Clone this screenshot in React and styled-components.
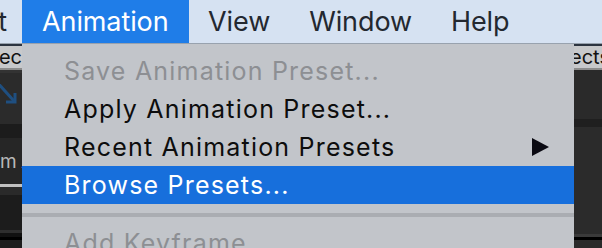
import React from "react";
import styled, { createGlobalStyle } from "styled-components";

const GlobalStyle = createGlobalStyle`
  html, body {
    margin: 0;
    padding: 0;
    background: #262626;
  }
  body {
    width: 602px;
    height: 248px;
    overflow: hidden;
    font-family: Inter, "Liberation Sans", sans-serif;
  }
`;

const Screen = styled.div`
  position: relative;
  width: 602px;
  height: 248px;
  overflow: hidden;
  display: flex;
  flex-direction: column;
`;

const MenuBar = styled.div`
  display: flex;
  flex-shrink: 0;
  height: 43px;
  background: #d6e2f2;
  border-bottom: 1px solid #98a2ae;
`;

const CutSlot = styled.div`
  width: 22px;
  display: flex;
  justify-content: flex-end;
  overflow: hidden;
`;

const BarItem = styled.div`
  display: flex;
  align-items: center;
  padding: 0 ${(p) => p.$pad || 19.5}px;
  font-size: 27px;
  letter-spacing: -0.1px;
  white-space: nowrap;
  color: ${(p) => (p.$active ? "#ffffff" : "#232830")};
  background: ${(p) => (p.$active ? "#1f7de8" : "transparent")};
`;

const Workspace = styled.div`
  flex: 1;
  display: flex;
  background: #262626;
`;

const Pane = styled.div`
  width: ${(p) => p.$width}px;
  display: flex;
  flex-direction: column;
  overflow: hidden;
`;

const Middle = styled.div`
  flex: 1;
  background: #262626;
`;

const Strip = styled.div`
  height: ${(p) => p.$h}px;
  flex-shrink: 0;
  background: ${(p) => p.$bg};
  ${(p) => (p.$grow ? "flex: 1;" : "")}
`;

const Tab = styled.div`
  height: 22px;
  flex-shrink: 0;
  display: flex;
  align-items: center;
  justify-content: ${(p) => (p.$align === "end" ? "flex-end" : "flex-start")};
  background: #c8c9cb;
  border-top: 2px solid #2c3440;
  border-bottom: 2px solid #8c8c8c;
  font-size: 20px;
  color: #111;
  white-space: nowrap;
`;

const TabText = styled.span`
  margin-left: ${(p) => p.$shift || 0}px;
`;

const ArrowArea = styled.div`
  height: 51px;
  flex-shrink: 0;
  background: #2b2b2b;
  border-top: 3px solid #333;
  display: flex;
  align-items: flex-start;
`;

const LabelArea = styled.div`
  height: 46px;
  flex-shrink: 0;
  background: #262626;
  display: flex;
  align-items: flex-end;
  padding-bottom: 11px;
  box-sizing: border-box;
  font-size: 19px;
  color: #b8b8b8;
  white-space: nowrap;
`;

const BlueText = styled.span`
  color: #3b8ee6;
  font-style: italic;
`;

const Menu = styled.div`
  position: absolute;
  left: 22px;
  top: 44px;
  width: 552px;
  bottom: 0;
  background: #c2c5ca;
  padding-top: 8px;
  box-sizing: border-box;
`;

const MenuItem = styled.div`
  height: 38px;
  display: flex;
  align-items: center;
  justify-content: space-between;
  padding: 0 25px 0 42px;
  font-size: 25px;
  letter-spacing: 1.2px;
  white-space: nowrap;
  color: ${(p) => (p.$disabled ? "#8d8f93" : p.$active ? "#ffffff" : "#0d0d0d")};
  background: ${(p) => (p.$active ? "#176fdc" : "transparent")};
`;

const Separator = styled.div`
  height: 4px;
  margin: 9px 0 7px;
  background: #aaadb2;
`;

function SubmenuArrow() {
  return (
    <svg width="17" height="18" viewBox="0 0 17 18">
      <polygon points="0,0 17,9 0,18" fill="#0a0a12" />
    </svg>
  );
}

function GuideArrow() {
  return (
    <svg width="18" height="34" viewBox="0 0 18 34">
      <path d="M-6 6 L14 28" stroke="#1f4f80" strokeWidth="3" fill="none" />
      <path d="M6 29 L15 29 L15 20" stroke="#1f4f80" strokeWidth="3" fill="none" />
    </svg>
  );
}

const barItems = ["View", "Window", "Help"];

export default function App() {
  return (
    <>
      <GlobalStyle />
      <Screen>
        <MenuBar>
          <CutSlot>
            <BarItem $pad={15}>Effect</BarItem>
          </CutSlot>
          <BarItem $active $pad={20}>Animation</BarItem>
          {barItems.map((label) => (
            <BarItem key={label}>{label}</BarItem>
          ))}
        </MenuBar>

        <Workspace>
          <Pane $width={22}>
            <Tab $align="end">
              <TabText>Effec</TabText>
            </Tab>
            <ArrowArea>
              <GuideArrow />
            </ArrowArea>
            <Strip $h={14} $bg="#1c1c1c" />
            <LabelArea>
              <span>
                m <BlueText>A</BlueText>
              </span>
            </LabelArea>
            <Strip $h={3} $bg="#c0c0c0" />
            <Strip $h={8} $bg="#2a2a2a" />
            <Strip $h={35} $bg="#1c1c1c" />
            <Strip $h={3} $bg="#2e2e2e" />
            <Strip $h={4} $bg="#111" />
            <Strip $h={3} $bg="#000" />
            <Strip $grow $bg="#1e1e1e" />
          </Pane>
          <Middle />
          <Pane $width={28}>
            <Tab>
              <TabText $shift={-4}>ects</TabText>
            </Tab>
            <Strip $h={49} $bg="#2a2a2a" />
            <Strip $h={8} $bg="#1f1f1f" />
            <Strip $h={107} $bg="#2b2b2b" />
            <Strip $h={3} $bg="#3a3a3a" />
            <Strip $h={3} $bg="#000" />
            <Strip $grow $bg="#2a2a2a" />
          </Pane>
        </Workspace>

        <Menu>
          <MenuItem $disabled>Save Animation Preset...</MenuItem>
          <MenuItem>Apply Animation Preset...</MenuItem>
          <MenuItem>
            <span>Recent Animation Presets</span>
            <SubmenuArrow />
          </MenuItem>
          <MenuItem $active>Browse Presets...</MenuItem>
          <Separator />
          <MenuItem $disabled>Add Keyframe</MenuItem>
        </Menu>
      </Screen>
    </>
  );
}
